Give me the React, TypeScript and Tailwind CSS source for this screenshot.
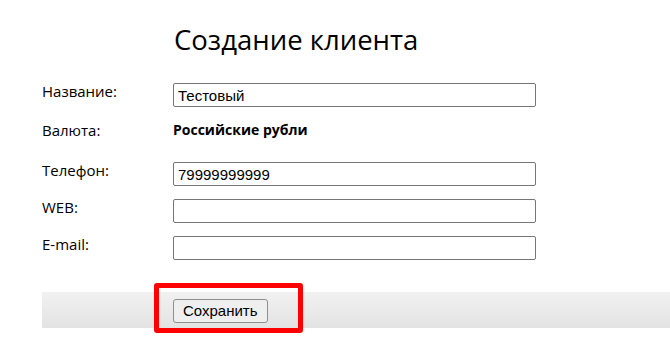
const fields = [
  { label: "Телефон:", value: "79999999999" },
  { label: "WEB:", value: "" },
  { label: "E-mail:", value: "" },
];

function TextInput({ value }: { value: string }) {
  return (
    <input
      type="text"
      defaultValue={value}
      className="box-border h-6 w-[363px] rounded-[2px] border border-[#767676] bg-white px-1 font-['Liberation_Sans',Arial,sans-serif] text-[15px] leading-[22px] text-black outline-none"
    />
  );
}

export default function App() {
  return (
    <div className="min-h-[353px] w-full bg-white font-['Open_Sans',sans-serif] text-black">
      <div className="pl-[42px] pt-[22px]">
        <h1 className="ml-[132px] text-[27.5px] leading-[36px] font-normal">
          Создание клиента
        </h1>

        <form className="mt-[25px] grid grid-cols-[131px_auto] gap-y-[13px]">
          <label className="text-[15px] leading-4 pt-0">Название:</label>
          <TextInput value="Тестовый" />

          <span className="mt-[2px] text-[15px] leading-4">Валюта:</span>
          <span className="mt-[2px] mb-[11px] text-[14px] leading-4 font-bold">
            Российские рубли
          </span>

          {fields.map((f) => (
            <div key={f.label} className="contents">
              <label className="text-[15px] leading-4">{f.label}</label>
              <TextInput value={f.value} />
            </div>
          ))}
        </form>

        <div className="mt-8 h-9 bg-gradient-to-b from-[#f1f1f1] to-[#e3e3e3] pl-[131px] pt-[6px]">
          <div className="relative inline-block">
            <button
              type="button"
              className="h-6 rounded-[3px] border border-[#8f8f8f] bg-[#efefef] px-[9px] font-['Liberation_Sans',Arial,sans-serif] text-[15px] leading-[22px] text-black"
            >
              Сохранить
            </button>
            <div className="pointer-events-none absolute left-[-19px] top-[-15px] h-[50px] w-[149px] rounded-[3px] border-[5px] border-[#ff0000]" />
          </div>
        </div>
      </div>
    </div>
  );
}
